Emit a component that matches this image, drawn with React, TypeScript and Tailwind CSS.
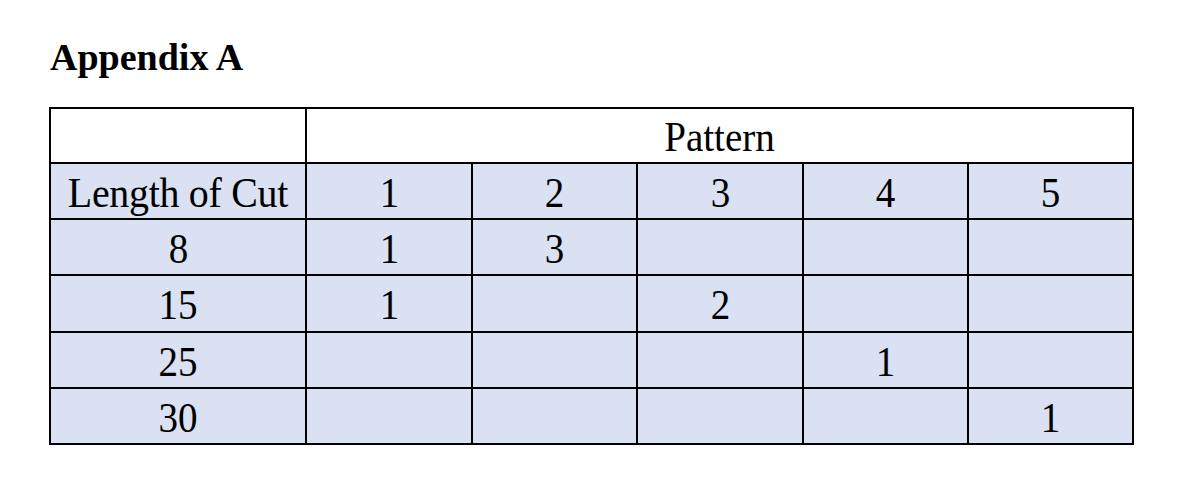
const rows: { cut: string; vals: string[]; h: string }[] = [
  { cut: '8', vals: ['1', '3', '', '', ''], h: 'h-[56px]' },
  { cut: '15', vals: ['1', '', '2', '', ''], h: 'h-[57px]' },
  { cut: '25', vals: ['', '', '', '1', ''], h: 'h-[56px]' },
  { cut: '30', vals: ['', '', '', '', '1'], h: 'h-[56px]' },
];

const cell = 'border-2 border-black p-0 pt-[3px] text-center align-middle font-normal';

// text in the reference is slightly condensed
const Txt = ({ children }: { children: React.ReactNode }) => (
  <span className="inline-block scale-x-[0.93] whitespace-nowrap">{children}</span>
);

export default function App() {
  return (
    <div
      className="w-[1202px] h-[494px] bg-white text-black pl-[50px] pt-[37px]"
      style={{ fontFamily: '"Liberation Serif", "Times New Roman", serif' }}
    >
      {/* Title */}
      <h1 className="text-[38px] leading-[40px] font-bold">Appendix A</h1>

      <table className="mt-[30px] -ml-px border-collapse table-fixed w-[1085px] text-[42px] leading-[46px]">
        <colgroup>
          <col className="w-[256px]" />
          <col className="w-[166px]" />
          <col className="w-[165px]" />
          <col className="w-[166px]" />
          <col className="w-[165px]" />
          <col className="w-[165px]" />
        </colgroup>
        <thead>
          <tr className="h-[55px]">
            <th className={cell}></th>
            <th className={cell} colSpan={5}>
              <Txt>Pattern</Txt>
            </th>
          </tr>
        </thead>
        <tbody className="bg-[#d9e1f2]">
          <tr className="h-[56px]">
            <td className={cell}>
              <span className="inline-block scale-x-[0.95] whitespace-nowrap tracking-[-0.3px]">
                Length of Cut
              </span>
            </td>
            {['1', '2', '3', '4', '5'].map((n) => (
              <td key={n} className={cell}>
                <Txt>{n}</Txt>
              </td>
            ))}
          </tr>
          {rows.map((r) => (
            <tr key={r.cut} className={r.h}>
              <td className={cell}>
                <Txt>{r.cut}</Txt>
              </td>
              {r.vals.map((v, i) => (
                <td key={i} className={cell}>
                  {v && <Txt>{v}</Txt>}
                </td>
              ))}
            </tr>
          ))}
        </tbody>
      </table>
    </div>
  );
}
